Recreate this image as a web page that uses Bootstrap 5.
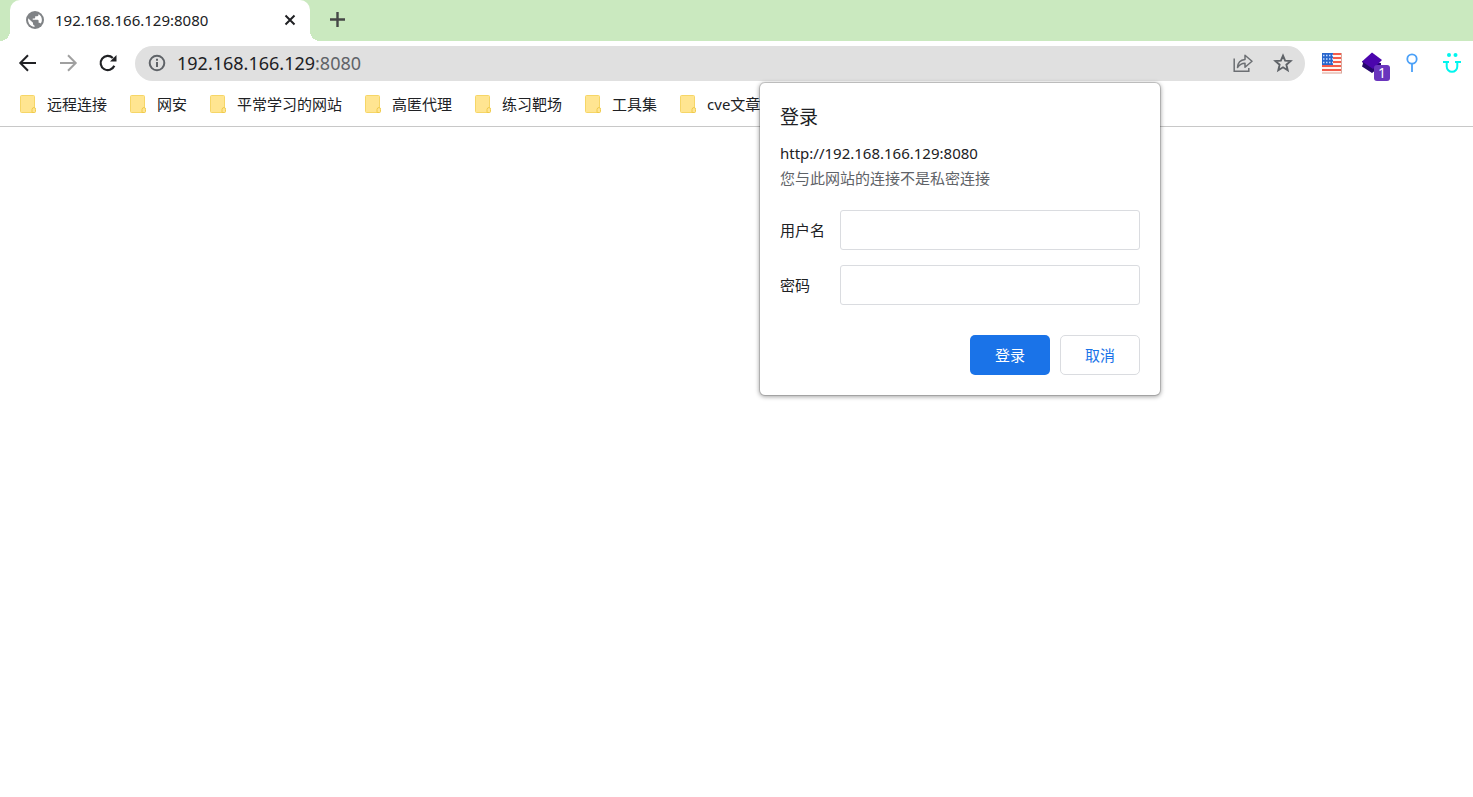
<!DOCTYPE html>
<html lang="zh-CN">
<head>
<meta charset="utf-8">
<meta name="viewport" content="width=device-width, initial-scale=1">
<title>192.168.166.129:8080</title>
<link href="https://cdn.jsdelivr.net/npm/bootstrap@5.3.0/dist/css/bootstrap.min.css" rel="stylesheet">
<style>
  :root { --strip: #cae9bf; --ink: #202124; --muted: #5f6368; --accent: #1a73e8; --line: #dadce0; }
  body { font-family: "Noto Sans", "Noto Sans CJK SC", sans-serif; font-size: 15px; line-height: 20px; color: var(--ink); }
  svg { display: block; flex: none; }
  .tab-strip { background: var(--strip); height: 41px; padding-left: 10px; }
  .page-tab { width: 300px; border-radius: 10px 10px 0 0; padding: 0 10px 2px 15px; gap: 10px; }
  .page-tab::before, .page-tab::after { content: ""; position: absolute; bottom: 0; width: 10px; height: 10px; }
  .page-tab::before { right: 100%; background: radial-gradient(circle at 0 0, transparent 10px, #fff 10px); }
  .page-tab::after { left: 100%; background: radial-gradient(circle at 100% 0, transparent 10px, #fff 10px); }
  .plain { border: 0; background: none; padding: 0; color: var(--ink); display: flex; align-items: center; justify-content: center; }
  .plain.tool { width: 40px; height: 35px; flex: none; padding-bottom: 1px; }
  .close-tab { width: 20px; height: 20px; }
  .plain.new-tab { width: 35px; margin-left: 10px; padding-bottom: 2px; }
  .toolbar { padding: 5px 1px 5px 8px; }
  .address { height: 35px; margin: 0 7px; padding: 0 2px 1px 13px; background: #e0e0e0; border-radius: 18px; }
  .address-text { font-size: 18px; line-height: 24px; margin-left: 11px; padding-bottom: 1px; }
  .address-text span, .note { color: var(--muted); }
  .bookmarks { height: 41px; padding: 0 20px 4px; gap: 23px; border-bottom: 1px solid #c8c8c8; }
  .bookmarks a { gap: 11px; color: var(--ink); }
  .counter { right: 2px; bottom: 0; width: 16px; height: 16px; border-radius: 3px; background: #6a35bd; color: #fff; font-size: 14px; line-height: 16px; }
  .login { top: 37px; right: 145px; width: 400px; padding: 20px; border-radius: 5px; z-index: 5; box-shadow: 0 0 0 1px rgba(0,0,0,.14), 0 1px 4px 1px rgba(0,0,0,.34); }
  .login h1 { font-size: 19px; line-height: 28px; font-weight: 400; margin-bottom: 10px; }
  .login p { line-height: 25px; margin: 0; }
  .login .note { margin-bottom: 19px; }
  .field-row { margin-bottom: 15px; }
  .field-row label { width: 60px; flex: none; }
  .field-row .form-control { height: 40px; border: 1px solid var(--line); border-radius: 3px; font-size: 15px; }
  .actions { gap: 10px; padding-top: 15px; }
  .login .btn { width: 80px; height: 40px; padding: 0; border-radius: 5px; font-size: 15px; }
  .btn-go { background: var(--accent); color: #fff; }
  .btn-cancel { border-color: var(--line); color: var(--accent); }
</style>
</head>
<body class="bg-white min-vh-100">
<svg width="0" height="0" class="position-absolute" aria-hidden="true">
  <symbol id="folder" viewBox="0 0 16 18">
    <path d="M1.500 0.500h12q1 0 1 1v15q0 1-1 1H1.500q-1 0-1-1V1.500q0-1 1-1z" fill="#ffe591" stroke="#f6d667"/>
    <path d="M12 17.500v-3q.3-2 2-2t1.500 2v2q0 1-1 1z" fill="#ffe591" stroke="#f0cb4b"/>
  </symbol>
</svg>
<header>
  <div class="tab-strip d-flex">
    <div class="page-tab position-relative d-flex align-items-center bg-white">
      <svg width="20" height="20" viewBox="0 0 20 20"><circle cx="10" cy="10" r="9" fill="#808386"/><path d="M3.100 8.300 8 12.800v1q0 1.500 1.500 1.700v1.400Q5.500 16.500 4 13.500 2.700 11 3.100 8.300ZM13.500 4q3.400 2 3.400 6 0 2-1.300 3.600-.5-.8-1.500-.8h-.5v-2q0-1-1-1H7.700V8.500h1.600q.9 0 .9-.9V6.200h1.700q1.600 0 1.600-1.500Z" fill="#fff"/></svg>
      <span class="flex-grow-1">192.168.166.129:8080</span>
      <button type="button" class="plain close-tab" aria-label="关闭标签页"><svg width="12" height="12" viewBox="0 0 12 12" stroke="currentColor" stroke-width="2"><path d="m1.500 1.500 9 9m0-9-9 9"/></svg></button>
    </div>
    <button type="button" class="plain new-tab" aria-label="新标签页"><svg width="15" height="15" viewBox="0 0 15 15" stroke="#454746" stroke-width="2.400"><path d="M7.500 0v15M0 7.500h15"/></svg></button>
  </div>
  <div class="toolbar d-flex align-items-center">
    <button type="button" class="plain tool" aria-label="后退"><svg width="20" height="20" viewBox="0 0 20 20" fill="none" stroke="currentColor" stroke-width="2"><path d="M18 10H3M10 2.300 2.300 10l7.700 7.700"/></svg></button>
    <button type="button" class="plain tool" aria-label="前进"><svg width="20" height="20" viewBox="0 0 20 20" fill="none" stroke="#a0a0a0" stroke-width="2"><path d="M2 10h15M10 2.300l7.700 7.700-7.700 7.700"/></svg></button>
    <button type="button" class="plain tool" aria-label="重新加载"><svg width="20" height="20" viewBox="0 0 20 20"><path d="M16.300 12.800A7.100 7.100 0 1 1 14.800 5" fill="none" stroke="currentColor" stroke-width="2.200"/><path d="M18.500 2v6.500H12z" fill="currentColor"/></svg></button>
    <div class="address position-relative d-flex align-items-center flex-grow-1">
      <svg width="18" height="18" viewBox="0 0 18 18" fill="none" stroke="#5f6368" stroke-width="2"><circle cx="9" cy="9" r="7.300"/><path d="M9 8v5M9 4.700v2"/></svg>
      <div class="address-text flex-grow-1">192.168.166.129<span>:8080</span></div>
      <button type="button" class="plain tool" aria-label="分享此页"><svg width="20" height="20" viewBox="0 0 20 20" fill="none" stroke="#6c6f73" stroke-width="1.500"><path d="M1.200 5.500v12.800h14.600V15"/><path d="M4.500 14.500Q5 7 12 6.500V2.300l7 6-7 6v-4Q7.500 10.200 4.500 14.500Z" stroke-linejoin="round"/></svg></button>
      <button type="button" class="plain tool" aria-label="添加书签"><svg width="20" height="20" viewBox="0 0 20 20" fill="none" stroke="#5f6368" stroke-width="1.900"><path d="m10 2.600 2.100 5 5.500.5-4.200 3.600 1.300 5.500-4.700-2.900-4.700 2.900 1.300-5.500-4.200-3.600 5.500-.5z"/></svg></button>

      <form class="login position-absolute bg-white" onsubmit="return false">
        <h1>登录</h1>
        <p>http://192.168.166.129:8080</p>
        <p class="note">您与此网站的连接不是私密连接</p>
        <div class="field-row d-flex align-items-center"><label for="user">用户名</label><input id="user" type="text" class="form-control"></div>
        <div class="field-row d-flex align-items-center"><label for="pass">密码</label><input id="pass" type="password" class="form-control"></div>
        <div class="actions d-flex justify-content-end">
          <button type="submit" class="btn btn-go">登录</button>
          <button type="button" class="btn btn-cancel">取消</button>
        </div>
      </form>
    </div>
    <button type="button" class="plain tool" aria-label="翻译"><svg width="22" height="22" viewBox="0 0 22 22"><path d="M1 1h20v21H1z" fill="#fff3ee"/><path d="M1 2h20M1 6h20M1 10h20M1 14h20M1 18h20" stroke="#f35b4a" stroke-width="2"/><path d="M1 21h20M20.500 1v20" stroke="#d9a99f"/><path d="M1 1h11v12H1z" fill="#2866cc"/><path d="M2 3.500h10M2 7h10M2 10.500h10" stroke="#c6dcff" stroke-width="1.500" stroke-dasharray="1.500 1.500"/></svg></button>
    <button type="button" class="plain tool position-relative" aria-label="扩展程序 1"><svg width="22" height="22" viewBox="0 0 22 22"><path d="m1 9 1 2.500-1 3L11 21l9-7v-3z" fill="#25066c"/><path d="m1 9.500 10-9 10 7.500-9 9z" fill="#4b05ad"/></svg><span class="counter position-absolute">1</span></button>
    <button type="button" class="plain tool" aria-label="定位工具"><svg width="16" height="20" viewBox="0 0 16 20" fill="none" stroke="#4aa0f8" stroke-width="1.800"><circle cx="8" cy="6" r="4.700"/><path d="M8 10.500V19"/></svg></button>
    <button type="button" class="plain tool" aria-label="笑脸工具"><svg width="18" height="22" viewBox="0 0 18 22" fill="none" stroke="#00f5ee" stroke-width="2"><path d="M0 10h6M12 10h6M3.700 10v4.500a5.300 5.300 0 0 0 10.600 0V10"/><circle cx="6" cy="3" r="2" fill="#00f5ee" stroke="none"/><circle cx="12.500" cy="3" r="2" fill="#00f5ee" stroke="none"/></svg></button>
  </div>
  <nav class="bookmarks d-flex align-items-center text-nowrap overflow-hidden" aria-label="书签栏">
    <a href="#" class="d-flex align-items-center text-decoration-none"><svg width="16" height="18"><use href="#folder"/></svg>远程连接</a>
    <a href="#" class="d-flex align-items-center text-decoration-none"><svg width="16" height="18"><use href="#folder"/></svg>网安</a>
    <a href="#" class="d-flex align-items-center text-decoration-none"><svg width="16" height="18"><use href="#folder"/></svg>平常学习的网站</a>
    <a href="#" class="d-flex align-items-center text-decoration-none"><svg width="16" height="18"><use href="#folder"/></svg>高匿代理</a>
    <a href="#" class="d-flex align-items-center text-decoration-none"><svg width="16" height="18"><use href="#folder"/></svg>练习靶场</a>
    <a href="#" class="d-flex align-items-center text-decoration-none"><svg width="16" height="18"><use href="#folder"/></svg>工具集</a>
    <a href="#" class="d-flex align-items-center text-decoration-none"><svg width="16" height="18"><use href="#folder"/></svg>cve文章</a>
  </nav>
</header>
<script src="https://cdn.jsdelivr.net/npm/bootstrap@5.3.0/dist/js/bootstrap.bundle.min.js"></script>
</body>
</html>
